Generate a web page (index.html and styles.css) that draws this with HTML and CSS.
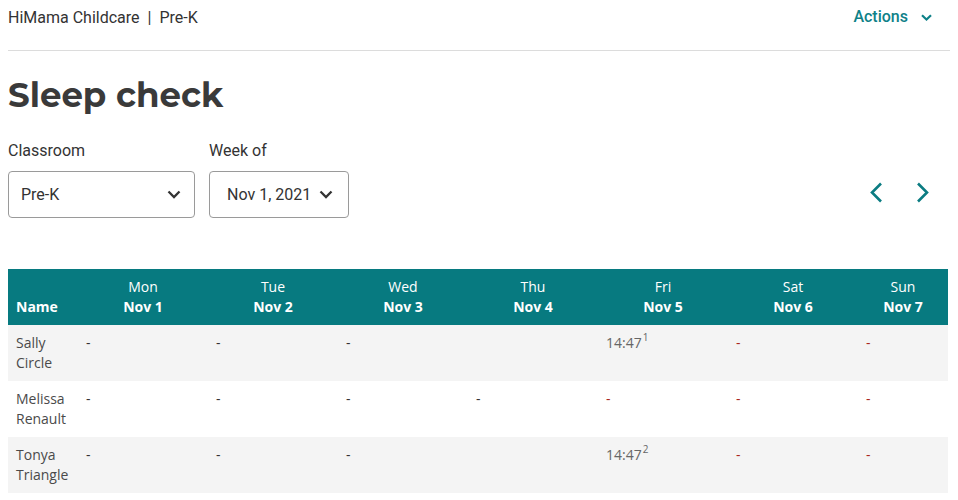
FILE: index.html
```html
<!DOCTYPE html>
<html lang="en">
<head>
<meta charset="utf-8">
<title>Sleep check</title>
<link rel="stylesheet" href="styles.css">
</head>
<body>
<header class="topbar">
  <div class="crumbs"><span>HiMama Childcare</span><span class="sep">|</span><span>Pre-K</span></div>
  <button class="actions">Actions
    <svg class="actions-chev" width="11" height="7" viewBox="0 0 11 7"><path d="M1 1.2 L5.5 5.5 L10 1.2" fill="none" stroke="currentColor" stroke-width="2.2"/></svg>
  </button>
</header>
<main>
  <h1 class="title">Sleep check</h1>
  <div class="filters">
    <div class="field">
      <div class="label">Classroom</div>
      <div class="select select-class"><span>Pre-K</span>
        <svg width="14" height="9" viewBox="0 0 14 9"><path d="M1.5 1.5 L7 7 L12.5 1.5" fill="none" stroke="#333" stroke-width="2.3"/></svg>
      </div>
    </div>
    <div class="field">
      <div class="label">Week of</div>
      <div class="select select-week"><span>Nov 1, 2021</span>
        <svg width="14" height="9" viewBox="0 0 14 9"><path d="M1.5 1.5 L7 7 L12.5 1.5" fill="none" stroke="#333" stroke-width="2.3"/></svg>
      </div>
    </div>
    <div class="nav">
      <svg width="14" height="21" viewBox="0 0 14 21"><path d="M12 1.5 L3 10.5 L12 19.5" fill="none" stroke="#0b7c82" stroke-width="2.6"/></svg>
      <svg width="14" height="21" viewBox="0 0 14 21"><path d="M2 1.5 L11 10.5 L2 19.5" fill="none" stroke="#0b7c82" stroke-width="2.6"/></svg>
    </div>
  </div>
  <table class="grid">
    <colgroup>
      <col class="c-name"><col class="c-day"><col class="c-day"><col class="c-day"><col class="c-day"><col class="c-day"><col class="c-day"><col class="c-sun">
    </colgroup>
    <thead>
      <tr>
        <th class="th-name">Name</th>
        <th><span class="dow">Mon</span><b>Nov 1</b></th>
        <th><span class="dow">Tue</span><b>Nov 2</b></th>
        <th><span class="dow">Wed</span><b>Nov 3</b></th>
        <th><span class="dow">Thu</span><b>Nov 4</b></th>
        <th><span class="dow">Fri</span><b>Nov 5</b></th>
        <th><span class="dow">Sat</span><b>Nov 6</b></th>
        <th><span class="dow">Sun</span><b>Nov 7</b></th>
      </tr>
    </thead>
    <tbody>
      <tr>
        <td class="name">Sally Circle</td>
        <td>-</td><td>-</td><td>-</td><td></td>
        <td class="time">14:47<sup>1</sup></td>
        <td class="red">-</td><td class="red">-</td>
      </tr>
      <tr>
        <td class="name">Melissa Renault</td>
        <td>-</td><td>-</td><td>-</td><td>-</td>
        <td class="red">-</td><td class="red">-</td><td class="red">-</td>
      </tr>
      <tr>
        <td class="name">Tonya Triangle</td>
        <td>-</td><td>-</td><td>-</td><td></td>
        <td class="time">14:47<sup>2</sup></td>
        <td class="red">-</td><td class="red">-</td>
      </tr>
    </tbody>
  </table>
</main>
</body>
</html>
```
FILE: styles.css
```css
body {
  margin: 8px;
  font-family: Roboto, "Liberation Sans", sans-serif;
  color: #333;
  background: #fff;
}
.topbar {
  display: flex;
  justify-content: space-between;
  align-items: flex-start;
  height: 42px;
  border-bottom: 1px solid #dcdcdc;
}
.crumbs {
  font-size: 16px;
  line-height: 19px;
  color: #333;
}
.sep { margin: 0 8px; }
.actions {
  display: flex;
  align-items: center;
  gap: 13px;
  margin-right: 18px;
  padding: 0;
  border: 0;
  background: none;
  font-family: Roboto, "Liberation Sans", sans-serif;
  font-size: 16px;
  font-weight: 500;
  line-height: 17px;
  color: #0e8188;
}
.actions-chev { margin-top: 1px; }
.title {
  margin: 22px 0 0;
  font-family: Montserrat, Inter, "Liberation Sans", sans-serif;
  font-weight: 700;
  font-size: 34px;
  line-height: 44px;
  color: #3a3a3a;
}
.filters {
  display: flex;
  align-items: flex-end;
  gap: 14px;
  margin-top: 23px;
}
.field { display: flex; flex-direction: column; }
.label {
  font-size: 16px;
  line-height: 19px;
  color: #333;
  margin-top: 1px;
  margin-bottom: 11px;
}
.select {
  box-sizing: border-box;
  height: 47px;
  display: flex;
  align-items: center;
  justify-content: space-between;
  border: 1px solid #9a9a9a;
  border-radius: 4px;
  font-size: 16px;
  color: #333;
}
.select-class { width: 187px; padding: 0 13px 0 12px; }
.select-week { width: 140px; padding: 0 15px 0 17px; }
.nav {
  margin-left: auto;
  margin-right: 20px;
  margin-bottom: 2px;
  display: flex;
  gap: 33px;
  height: 47px;
  align-items: center;
}
.grid {
  margin-top: 51px;
  width: 940px;
  table-layout: fixed;
  border-collapse: collapse;
  font-family: "Open Sans", "Liberation Sans", sans-serif;
  font-size: 14px;
  line-height: 20px;
}
.c-name { width: 70px; }
.c-day { width: 130px; }
.c-sun { width: 90px; }
.grid thead tr { background: #077a80; color: #fff; }
.grid th {
  padding: 8px;
  font-weight: 400;
  text-align: center;
  vertical-align: bottom;
}
.grid th .dow { display: block; }
.grid th b { display: block; font-weight: 700; }
.grid th.th-name { text-align: left; font-weight: 700; }
.grid td {
  padding: 8px;
  vertical-align: top;
  color: #333;
  height: 40px;
}
.grid td.name { color: #4a4a4a; padding-right: 0; }
.grid tbody tr:nth-child(odd) { background: #f4f4f4; }
.grid td.red { color: #a8281e; }
.grid td.time { color: #666; }
.grid td.time sup {
  font-size: 10px;
  line-height: 0;
  vertical-align: 7px;
  margin-left: 1px;
}
```
